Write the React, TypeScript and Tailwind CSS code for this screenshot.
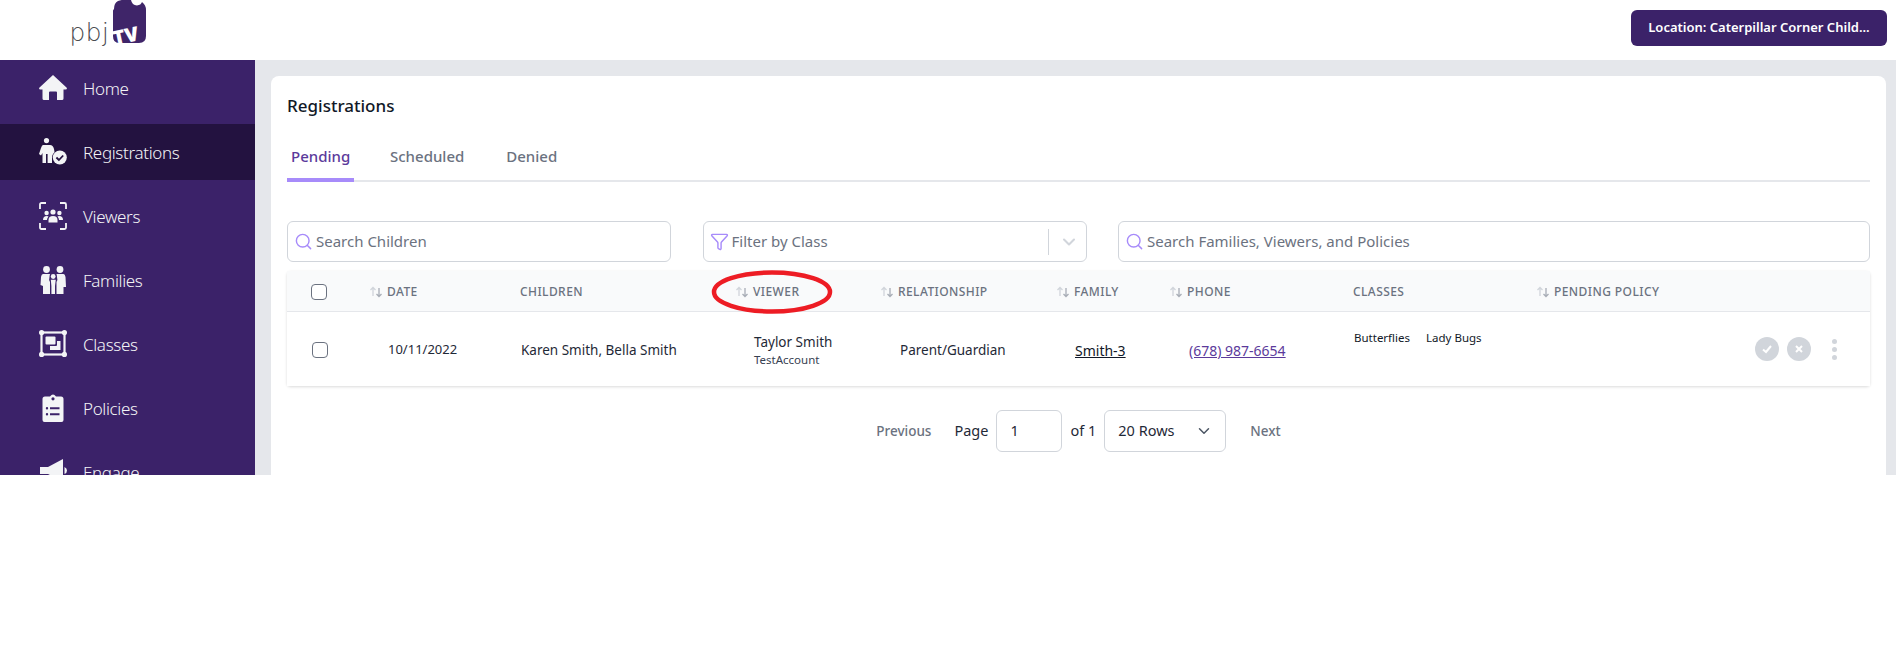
import React from "react";
import { ChevronDown, Filter, Search } from "lucide-react";

const ICON = "w-[28px] h-[28px] text-[#f3f4f6] shrink-0";

function HomeIcon() {
  return (
    <svg viewBox="0 0 28 28" className={ICON} fill="currentColor">
      <path d="M14 1 L28 14 Q28 15.5 26.5 15.5 H24.5 V24.5 Q24.5 26 23 26 H18 V18.5 Q18 17.5 17 17.5 H11 Q10 17.5 10 18.5 V26 H5 Q3.5 26 3.5 24.5 V15.5 H1.5 Q0 15.5 0 14 Z" />
    </svg>
  );
}
function RegIcon() {
  return (
    <svg viewBox="0 0 28 28" className={ICON} fill="currentColor">
      <circle cx="7.5" cy="2.6" r="2.6" />
      <path d="M4 7 H11 Q14 7 15 11 L15.5 14 A8.5 8.5 0 0 0 13 20 V25 H8.6 V16 H7 V25 H3.5 V15 L2 17.5 L0 16 L2 10 Q3 7 4 7 Z" />
      <circle cx="20.8" cy="19.5" r="7" />
      <path d="M17.4 19.5 L19.9 22 L24.2 17.5" fill="none" stroke="#231240" strokeWidth="1.8" />
    </svg>
  );
}
function ViewersIcon() {
  return (
    <svg viewBox="0 0 28 28" className={ICON} fill="currentColor">
      <path d="M1 7 V2.5 Q1 1 2.5 1 H7 M21 1 H25.5 Q27 1 27 2.5 V7 M27 21 V25.5 Q27 27 25.5 27 H21 M7 27 H2.5 Q1 27 1 25.5 V21" fill="none" stroke="currentColor" strokeWidth="1.8" />
      <circle cx="14" cy="10" r="2.6" />
      <circle cx="7.6" cy="11" r="2.2" />
      <circle cx="20.4" cy="11" r="2.2" />
      <path d="M9.5 20.5 V18 Q9.5 14 14 14 Q18.5 14 18.5 18 V20.5 Z" />
      <path d="M4 18 Q4 14 8 14 L9.5 14.5 Q8 16 8 18 Z M24 18 Q24 14 20 14 L18.5 14.5 Q20 16 20 18 Z" />
    </svg>
  );
}
function FamiliesIcon() {
  return (
    <svg viewBox="0 0 28 28" className={ICON} fill="currentColor">
      <circle cx="7.5" cy="3.5" r="3.4" />
      <circle cx="21" cy="3.5" r="3.4" />
      <circle cx="14.2" cy="10.5" r="2.4" />
      <path d="M4 8 H11 Q10.5 10 10.5 11 Q9.5 14 11 16 V28 H4 V20 L1.5 19 L2 11 Q2.5 8 4 8 Z" />
      <path d="M24.5 8 H17.5 Q18 10 18 11 Q19 14 17.5 16 V28 H24.5 V21 H27 L26.5 11 Q26 8 24.5 8 Z" />
      <path d="M11.8 13.8 H16.8 L16 20 V28 H12.4 V20 Z" />
    </svg>
  );
}
function ClassesIcon() {
  return (
    <svg viewBox="0 0 28 28" className={ICON} fill="currentColor">
      <rect x="2.5" y="2.5" width="23" height="22" fill="none" stroke="currentColor" strokeWidth="2.2" />
      <circle cx="2.6" cy="2.6" r="2.6" />
      <circle cx="25.4" cy="2.6" r="2.6" />
      <circle cx="2.6" cy="24.4" r="2.6" />
      <circle cx="25.4" cy="24.4" r="2.6" />
      <rect x="6.5" y="6.5" width="10" height="8" rx="1" />
      <path d="M18 11 H21.5 V20 H11 V16 H17 Q18 16 18 15 Z" />
    </svg>
  );
}
function PoliciesIcon() {
  return (
    <svg viewBox="0 0 28 28" className={ICON} fill="currentColor" fillRule="evenodd">
      <path d="M11 2.5 Q14 -1.5 17 2.5 H22 Q24.5 2.5 24.5 5 V26 Q24.5 28 22.5 28 H5.5 Q3.5 28 3.5 26 V5 Q3.5 2.5 6 2.5 Z M14 3.2 A1.6 1.6 0 1 0 14 6.4 A1.6 1.6 0 1 0 14 3.2 Z M8 13 A1.2 1.2 0 1 0 8 15.4 A1.2 1.2 0 1 0 8 13 Z M8 19 A1.2 1.2 0 1 0 8 21.4 A1.2 1.2 0 1 0 8 19 Z M11 13.2 V15.2 H20.5 V13.2 Z M11 19.2 V21.2 H20.5 V19.2 Z" />
    </svg>
  );
}
function EngageIcon() {
  return (
    <svg viewBox="0 0 28 28" className={ICON} fill="currentColor">
      <path d="M1 9 H9 L24 1 V24 L9 16 H1 Z M25.5 9 Q28 10 28 12.5 Q28 15 25.5 16 Z" />
      <path d="M3 17 H8 L10 26 H5 Z" />
    </svg>
  );
}

function NavItem({ icon, label, active }: { icon: React.ReactNode; label: string; active?: boolean }) {
  return (
    <div className={`h-14 shrink-0 flex items-center gap-[16px] pl-[39px] ${active ? "bg-[#231240]" : ""}`}>
      {icon}
      <span className="text-[17px] font-light leading-none tracking-[-0.02em] text-[#f3f4f6]">{label}</span>
    </div>
  );
}

function SortIcon() {
  return (
    <svg viewBox="0 0 14 12" className="w-[14px] h-[12px] shrink-0 mr-[4px]" fill="none" strokeWidth="1.3">
      <path d="M4 10 V2 M1.5 4 L4 1.5 L6.5 4" stroke="#d1d5db" />
      <path d="M10 2 V10 M7.5 8 L10 10.5 L12.5 8" stroke="#a8adb6" />
    </svg>
  );
}

function Th({ label, sort }: { label: string; sort?: boolean }) {
  return (
    <div className="flex items-center pt-[2px] text-[12px] font-medium tracking-[0.035em] text-[#6b7280]">
      {sort && <SortIcon />}
      {label}
    </div>
  );
}

function Box() {
  return <div className="w-[16px] h-[16px] rounded-[4px] border border-[#6b7280] bg-white" />;
}

const GRID = "grid grid-cols-[82px_151px_215px_145px_176px_113px_184px_183px_335px]";

export default function App() {
  return (
    <div className="h-[475px] overflow-hidden flex flex-col bg-[#e5e7eb] font-['Noto_Sans',sans-serif]">
      <header className="h-[60px] shrink-0 bg-white flex items-start justify-between pr-[9px]">
        <div className="relative w-[150px] h-[50px] ml-[70px]">
          <span className="absolute left-0 top-[18px] text-[25px] leading-[28px] font-['Inter',sans-serif] font-extralight text-[#4b4b50] tracking-[0.06em]">pbj</span>
          <svg viewBox="0 0 34 44" className="absolute left-[43px] top-0 w-[34px] h-[44px]">
            <path d="M5 1 Q10 -1 18 0 Q19 5 24 5.5 Q28 5 29 2 Q33 5 33 10 V36 Q33 43 26 43 H6 Q0 43 0 36 V14 Q-1 11 1 9 Q1 3 5 1 Z" fill="#3f2569" />
          </svg>
          <span className="absolute left-[43px] top-[26px] text-[20px] leading-[20px] font-black text-white -rotate-12">TV</span>
        </div>
        <button className="mt-[10px] w-[256px] h-[36px] rounded-[6px] bg-[#3b2269] text-white text-[13px] font-semibold">
          Location: Caterpillar Corner Child...
        </button>
      </header>
      <div className="flex flex-1 min-h-0">
        <aside className="w-[255px] shrink-0 bg-[#3b2269] flex flex-col gap-2 overflow-hidden">
          <NavItem icon={<HomeIcon />} label="Home" />
          <NavItem icon={<RegIcon />} label="Registrations" active />
          <NavItem icon={<ViewersIcon />} label="Viewers" />
          <NavItem icon={<FamiliesIcon />} label="Families" />
          <NavItem icon={<ClassesIcon />} label="Classes" />
          <NavItem icon={<PoliciesIcon />} label="Policies" />
          <NavItem icon={<EngageIcon />} label="Engage" />
        </aside>
        <main className="flex-1 pt-[16px] pl-[16px] pr-[10px] min-w-0">
          <div className="h-[500px] bg-white rounded-[8px] px-[16px] pt-[18px]">
            <h1 className="text-[17px] leading-[24px] font-medium text-[#111827]">Registrations</h1>
            <div className="mt-[20px] h-[44px] flex items-start border-b-2 border-[#e5e7eb] text-[15px] leading-[20px] font-medium text-[#6b7280]">
              <div className="h-[44px] w-[67px] pl-[4px] pt-[8px] border-b-[4px] border-[#a78bfa] text-[#5b3a9b]">Pending</div>
              <div className="ml-[36px] pt-[8px]">Scheduled</div>
              <div className="ml-[42px] pt-[8px]">Denied</div>
            </div>
            <div className="mt-[39px] flex gap-[31.5px] text-[15px] text-[#6b7280]">
              <div className="w-[384px] h-[41px] flex items-center gap-[3px] pl-[6px] border border-[#d1d5db] rounded-[6px]">
                <Search className="w-[19px] h-[19px] text-[#a78bfa]" strokeWidth={1.8} />
                Search Children
              </div>
              <div className="w-[384px] h-[41px] flex items-center gap-[3px] pl-[6px] border border-[#d1d5db] rounded-[6px]">
                <Filter className="w-[19px] h-[19px] text-[#a78bfa]" strokeWidth={1.8} />
                <span className="flex-1">Filter by Class</span>
                <div className="w-px h-[26px] bg-[#d1d5db]" />
                <ChevronDown className="w-[20px] h-[20px] mx-[7px] text-[#d1d5db]" strokeWidth={2.5} />
              </div>
              <div className="flex-1 h-[41px] flex items-center gap-[3px] pl-[6px] border border-[#d1d5db] rounded-[6px]">
                <Search className="w-[19px] h-[19px] text-[#a78bfa]" strokeWidth={1.8} />
                Search Families, Viewers, and Policies
              </div>
            </div>
            <div className="relative mt-[9px] shadow-[0_1px_3px_rgba(0,0,0,0.15)] rounded-[4px]">
              <div className={`${GRID} h-[41px] bg-[#f9fafb] border-b border-[#e5e7eb] items-center`}>
                <div className="pl-[24px] pt-[1px]"><Box /></div>
                <Th label="DATE" sort />
                <Th label="CHILDREN" />
                <Th label="VIEWER" sort />
                <Th label="RELATIONSHIP" sort />
                <Th label="FAMILY" sort />
                <Th label="PHONE" sort />
                <Th label="CLASSES" />
                <Th label="PENDING POLICY" sort />
              </div>
              <div className={`${GRID} h-[74px] pt-[2px] items-center text-[13.5px] text-[#1f2937] bg-white`}>
                <div className="pl-[25px]"><Box /></div>
                <div className="pl-[19px] text-[13px]">10/11/2022</div>
                <div className="pl-[1px]">Karen Smith, Bella Smith</div>
                <div className="pl-[19px] flex flex-col">
                  <span className="leading-[20px]">Taylor Smith</span>
                  <span className="text-[11.5px] leading-[16px] text-[#374151]">TestAccount</span>
                </div>
                <div className="pl-[20px]">Parent/Guardian</div>
                <div className="pl-[19px] text-[14px] underline text-[#111827]">Smith-3</div>
                <div className="pl-[20px] text-[14px] underline text-[#5b3a9b]">(678) 987-6654</div>
                <div className="pl-[1px] self-start pt-[16px] flex gap-[16px] text-[11.5px] leading-[16px] text-[#111827]">
                  <span>Butterflies</span>
                  <span>Lady Bugs</span>
                </div>
                <div className="flex items-center justify-end pr-[34px] gap-[8px] -mt-[2px]">
                  <div className="w-[24px] h-[24px] rounded-full bg-[#d1d5db] flex items-center justify-center">
                    <svg viewBox="0 0 12 12" className="w-[12px] h-[12px]" fill="none" stroke="#fff" strokeWidth="2"><path d="M2 6.5 L5 9 L10 3" /></svg>
                  </div>
                  <div className="w-[24px] h-[24px] rounded-full bg-[#d1d5db] flex items-center justify-center">
                    <svg viewBox="0 0 12 12" className="w-[12px] h-[12px]" fill="none" stroke="#fff" strokeWidth="2"><path d="M3 3 L9 9 M9 3 L3 9" /></svg>
                  </div>
                  <div className="ml-[13px] flex flex-col gap-[3px]">
                    <div className="w-[5px] h-[5px] rounded-full bg-[#d1d5db]" />
                    <div className="w-[5px] h-[5px] rounded-full bg-[#d1d5db]" />
                    <div className="w-[5px] h-[5px] rounded-full bg-[#d1d5db]" />
                  </div>
                </div>
              </div>
              <svg viewBox="0 0 122 44" className="absolute left-[424px] -top-[1px] w-[122px] h-[44px] pointer-events-none" fill="none">
                <ellipse cx="61" cy="22" rx="58" ry="19.5" stroke="#ed1c24" strokeWidth="4.5" />
              </svg>
            </div>
            <div className="mt-[24px] flex items-center justify-center text-[14.5px] text-[#1f2937]">
              <span className="text-[13.5px] font-medium text-[#6b7280] mr-[23px]">Previous</span>
              <span>Page</span>
              <div className="ml-[8px] w-[66px] h-[42px] border border-[#d1d5db] rounded-[6px] flex items-center pl-[13px]">1</div>
              <span className="ml-[8px]">of 1</span>
              <div className="ml-[8px] w-[122px] h-[42px] border border-[#d1d5db] rounded-[6px] flex items-center justify-between pl-[13px] pr-[12px]">
                20 Rows
                <ChevronDown className="w-[18px] h-[18px] text-[#4b5563]" strokeWidth={2} />
              </div>
              <span className="text-[13.5px] font-medium text-[#6b7280] ml-[24px]">Next</span>
            </div>
          </div>
        </main>
      </div>
    </div>
  );
}
